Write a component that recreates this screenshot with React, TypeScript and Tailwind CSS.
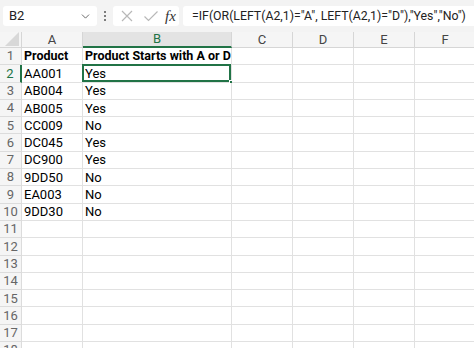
import { ChevronDown } from 'lucide-react';

const COLS = [
  { key: 'A', w: 'w-[61px]' },
  { key: 'B', w: 'w-[149px]' },
  { key: 'C', w: 'w-[61px]' },
  { key: 'D', w: 'w-[61px]' },
  { key: 'E', w: 'w-[61px]' },
  { key: 'F', w: 'w-[61px]' },
];

const DATA: Record<number, [string, string]> = {
  1: ['Product', 'Product Starts with A or D'],
  2: ['AA001', 'Yes'],
  3: ['AB004', 'Yes'],
  4: ['AB005', 'Yes'],
  5: ['CC009', 'No'],
  6: ['DC045', 'Yes'],
  7: ['DC900', 'Yes'],
  8: ['9DD50', 'No'],
  9: ['EA003', 'No'],
  10: ['9DD30', 'No'],
};

const font = { fontFamily: 'Roboto, "Noto Sans", sans-serif' };

function Toolbar() {
  return (
    <div className="flex h-[32px] items-center bg-[#f3f3f3] pl-[3px]">
      <div className="flex h-[20px] w-[94px] shrink-0 items-center justify-between rounded-[3px] bg-white pl-[6px] pr-[5px]">
        <span className="text-[13px] text-[#222]">B2</span>
        <ChevronDown size={13} strokeWidth={1.6} className="text-[#555]" />
      </div>
      <div className="flex w-[16px] shrink-0 flex-col items-center gap-[2px]">
        <span className="h-[2px] w-[2px] rounded-full bg-[#555]" />
        <span className="h-[2px] w-[2px] rounded-full bg-[#555]" />
        <span className="h-[2px] w-[2px] rounded-full bg-[#555]" />
      </div>
      <div className="flex h-[20px] w-[66px] shrink-0 items-center rounded-[3px] bg-white pl-[7px]">
        <svg width="14" height="14" viewBox="0 0 14 14" className="text-[#b8b8b8]">
          <path d="M2 2 L12 12 M12 2 L2 12" stroke="currentColor" strokeWidth="1.2" fill="none" />
        </svg>
        <svg width="16" height="14" viewBox="0 0 16 14" className="ml-[9px] text-[#b8b8b8]">
          <path d="M1.5 7.5 L5.5 11.5 L14.5 2.5" stroke="currentColor" strokeWidth="1.2" fill="none" />
        </svg>
        <span
          className="ml-[6px] text-[15px] italic text-[#333]"
          style={{ fontFamily: '"Liberation Serif", serif' }}
        >
          fx
        </span>
      </div>
      <div className="ml-[4px] flex h-[20px] min-w-0 flex-1 items-center overflow-hidden rounded-l-[3px] bg-white pl-[9px]">
        <span className="whitespace-nowrap text-[12.3px] text-[#222]">
          =IF(OR(LEFT(A2,1)="A", LEFT(A2,1)="D"),"Yes","No")
        </span>
      </div>
    </div>
  );
}

function ColumnHeader() {
  return (
    <div className="flex h-[16px] bg-[#f5f5f5]">
      <div className="relative w-[22px] shrink-0 border-r border-b border-[#d6d6d6]">
        <svg width="14" height="14" viewBox="0 0 14 14" className="absolute bottom-[1px] right-[2px]">
          <path d="M14 0 L14 14 L0 14 Z" fill="#d8d8d8" />
        </svg>
      </div>
      {COLS.map((c) => {
        const active = c.key === 'B';
        return (
          <div
            key={c.key}
            className={`${c.w} flex shrink-0 items-center justify-center text-[13px] ${
              active
                ? 'border-b-2 border-r border-b-[#217346] border-r-[#d6d6d6] bg-[#e3e3e3] text-[#217346]'
                : 'border-b border-r border-[#d6d6d6] text-[#444]'
            }`}
          >
            {c.key}
          </div>
        );
      })}
    </div>
  );
}

function Row({ n }: { n: number }) {
  const data = DATA[n];
  const active = n === 2;
  return (
    <div className="flex h-[17.3px]">
      <div
        className={`flex w-[22px] shrink-0 items-center justify-center bg-[#f5f5f5] text-[13px] ${
          active
            ? 'border-r-2 border-b border-r-[#217346] border-b-[#e0e0e0] bg-[#e3e3e3] text-[#217346]'
            : 'border-r border-b border-[#dcdcdc] text-[#666]'
        }`}
      >
        {n}
      </div>
      {COLS.map((c, i) => {
        const text = data ? data[i] : undefined;
        const selected = active && c.key === 'B';
        return (
          <div
            key={c.key}
            className={`${c.w} relative flex shrink-0 items-center border-r border-b border-[#e1e1e1] pl-[2px] text-black ${
              n === 1 ? 'text-[12.5px] font-bold' : 'text-[13px]'
            }`}
          >
            {selected && (
              <>
                <div className="absolute -left-[1px] -top-[1px] bottom-0 right-0 border-2 border-[#217346]" />
                <div className="absolute -bottom-[2px] -right-[2px] h-[4px] w-[4px] border border-white bg-[#217346]" />
              </>
            )}
            <span className="whitespace-nowrap leading-none">{text}</span>
          </div>
        );
      })}
    </div>
  );
}

export default function App() {
  const rows = Array.from({ length: 18 }, (_, i) => i + 1);
  return (
    <div className="h-[348px] w-[474px] overflow-hidden bg-white" style={font}>
      <Toolbar />
      <ColumnHeader />
      {rows.map((n) => (
        <Row key={n} n={n} />
      ))}
    </div>
  );
}
